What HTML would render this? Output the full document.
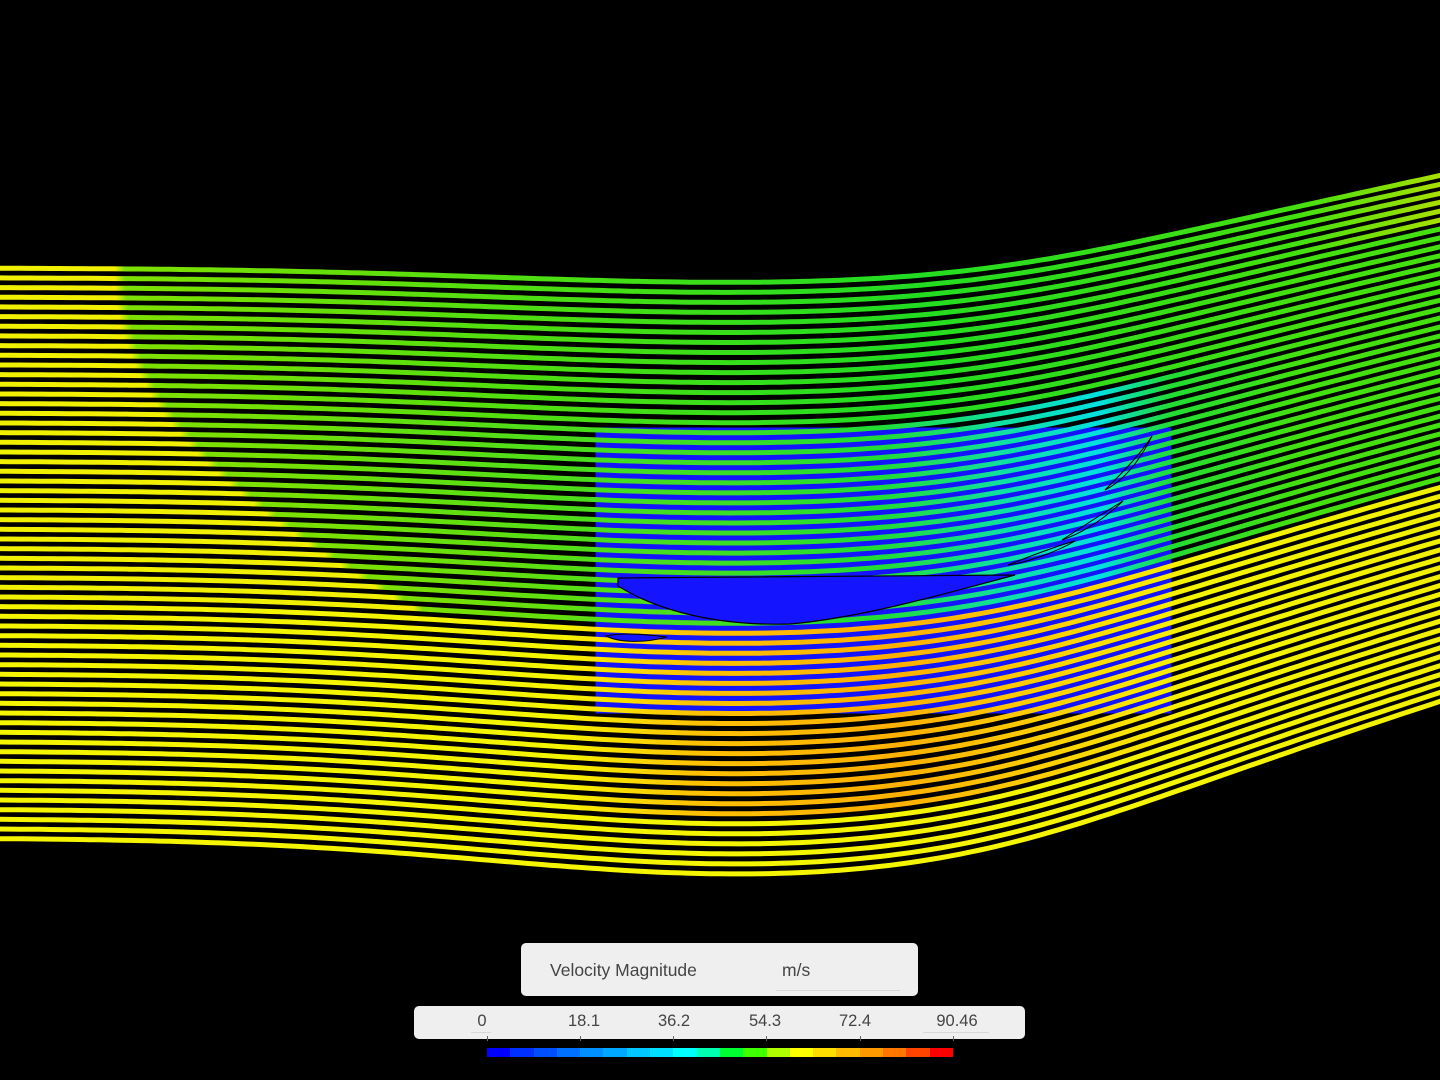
<!DOCTYPE html>
<html><head><meta charset="utf-8"><style>
html,body{margin:0;padding:0;background:#000;width:1440px;height:1080px;overflow:hidden;font-family:"Liberation Sans",sans-serif}
#s{position:absolute;left:0;top:0}
.t{position:absolute;left:521px;top:943px;width:397px;height:53px;background:#efefef;border-radius:5px}
.t span{position:absolute;top:17px;font-size:17.5px;color:#444}
.sc{position:absolute;left:414px;top:1006px;width:611px;height:33px;background:#efefef;border-radius:5px}
.sc span{position:absolute;top:6px;font-size:16.5px;color:#444;transform:translateX(-50%)}
.tick{position:absolute;top:1036px;width:1px;height:5px;background:#666}
.bar{position:absolute;left:487px;top:1048px;width:466px;height:9px;display:flex}
.bar div{flex:1}
</style></head><body>
<svg id="s" width="1440" height="1080" xmlns="http://www.w3.org/2000/svg">
<rect x="595" y="427" width="577" height="287" fill="#1414ff" stroke="#000" stroke-width="1"/>
<g id="defs"></g><g id="lines" fill="none" stroke-width="5" stroke-linecap="round"></g>
<path d="M618,578 L1015,575 C940,595 860,618 790,624 C720,626 660,612 618,586 Z" fill="#1414ff" stroke="#000" stroke-width="1.2"/>
<path d="M606,636 C625,632 650,635 667,637 C645,643 620,643 606,636 Z" fill="#1414ff" stroke="#000" stroke-width="1"/>
<path d="M1008,565 C1030,556 1060,545 1075,541 C1060,550 1030,562 1008,565 Z" fill="none" stroke="#000" stroke-width="1"/>
<path d="M1062,540 C1085,525 1105,512 1123,501 C1105,518 1085,532 1062,540 Z" fill="none" stroke="#000" stroke-width="1"/>
<path d="M1105,490 C1120,475 1140,455 1152,436 C1140,460 1125,480 1105,490 Z" fill="none" stroke="#000" stroke-width="1"/>
</svg>
<div class="t"><span style="left:29px">Velocity Magnitude</span><span style="left:261px">m/s</span><div style="position:absolute;left:255px;top:47px;width:124px;height:1px;background:#d8d8d8"></div></div>
<div class="sc"><span style="left:68px">0</span><span style="left:170px">18.1</span><span style="left:260px">36.2</span><span style="left:351px">54.3</span><span style="left:441px">72.4</span><span style="left:543px">90.46</span>
<div style="position:absolute;left:57px;top:26px;width:20px;height:1px;background:#d8d8d8"></div><div style="position:absolute;left:509px;top:26px;width:66px;height:1px;background:#d8d8d8"></div></div>
<div class="tick" style="left:487px"></div><div class="tick" style="left:580px"></div><div class="tick" style="left:673px"></div><div class="tick" style="left:766px"></div><div class="tick" style="left:860px"></div><div class="tick" style="left:953px"></div>
<div class="bar">
<div style="background:#0000ff"></div><div style="background:#0030ff"></div><div style="background:#0050ff"></div><div style="background:#0070ff"></div><div style="background:#0090ff"></div><div style="background:#00a8ff"></div><div style="background:#00c8ff"></div><div style="background:#00e0ff"></div><div style="background:#00ffff"></div><div style="background:#00ffb0"></div><div style="background:#00ff30"></div><div style="background:#40ff00"></div><div style="background:#b0ff00"></div><div style="background:#ffff00"></div><div style="background:#ffdd00"></div><div style="background:#ffbb00"></div><div style="background:#ff9900"></div><div style="background:#ff7700"></div><div style="background:#ff4400"></div><div style="background:#ff0000"></div>
</div>
<script>
var N=60,ns="http://www.w3.org/2000/svg",G=document.getElementById('lines'),D=document.getElementById('defs');
var defs=document.createElementNS(ns,'defs');D.appendChild(defs);
function Y(x,t){var y0=268+570*t;var dip=(15+22*t)*Math.exp(-Math.pow((x-760)/380,2));
var s=80*Math.log(1+Math.exp((x-1000)/80))/440;var R=93+45*t;
return y0+dip-R*s;}
for(var i=0;i<N;i++){var t=i/(N-1);var d='';for(var x=-10;x<=1450;x+=10){d+=(x<0?'M':'L')+x+','+Y(x,t).toFixed(1);}
var g=document.createElementNS(ns,'linearGradient');g.setAttribute('id','g'+i);g.setAttribute('gradientUnits','userSpaceOnUse');g.setAttribute('x1',0);g.setAttribute('x2',1440);g.setAttribute('y1',0);g.setAttribute('y2',0);
var st=[];
if(t<0.58){var xb=120+1000*Math.pow(t,2.2);st.push([0,'#f0f000'],[xb-5,'#f0f000'],[xb+5,'#7ee000']);
 if(t>0.25){st.push([880,'#22dd33'],[1000,'#10e0a0'],[1100,'#00e0e0'],[1170,'#22dd33']);}else{st.push([900,'#22dd22']);}
 st.push([1300,'#44e010'],[1440,t<0.1?'#a8e000':'#44e010']);}
else{st.push([0,'#f5f500'],[560,'#f5f500']);if(t<0.9){st.push([700,'#ffc000'],[900,'#ffb000'],[1050,'#ffd000']);}st.push([1200,'#f5f500'],[1440,'#f0f000']);}
st.forEach(function(p){var o=document.createElementNS(ns,'stop');o.setAttribute('offset',Math.max(0,Math.min(1,p[0]/1440)));o.setAttribute('stop-color',p[1]);g.appendChild(o);});
defs.appendChild(g);
var p=document.createElementNS(ns,'path');p.setAttribute('d',d);p.setAttribute('stroke','url(#g'+i+')');G.appendChild(p);}
</script>
</body></html>
